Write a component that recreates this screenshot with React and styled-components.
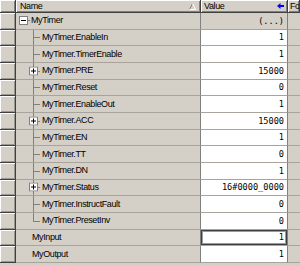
import React from 'react';
import styled, { createGlobalStyle, css } from 'styled-components';

const Global = createGlobalStyle`
  html, body { margin: 0; padding: 0; background: #d4d0c8; }
  body { width: 300px; height: 266px; overflow: hidden; }
  #root { width: 300px; height: 266px; }
`;

const Grid = styled.div`
  display: grid;
  grid-template-columns: 16px 185px 87px 12px;
  grid-template-rows: 13px repeat(15, 16.6667px);
  width: 300px;
  background: #d4d0c8;
  font-family: "Liberation Sans", Arial, sans-serif;
  font-size: 9px;
  letter-spacing: -0.4px;
  color: #000;
  overflow: hidden;
`;

const HeaderCell = styled.div`
  box-sizing: border-box;
  display: flex;
  align-items: center;
  justify-content: space-between;
  padding: 0 ${p => p.$pr || 0}px 0 ${p => p.$pl || 0}px;
  background: #d4d0c8;
  border-right: 1px solid #404040;
  border-bottom: 1px solid #404040;
  box-shadow: inset 1px 1px 0 #ffffff, inset -1px -1px 0 #808080;
  white-space: nowrap;
  overflow: hidden;
`;

const Gutter = styled.div`
  box-sizing: border-box;
  background: #d4d0c8;
  border-right: 1px solid #404040;
  border-bottom: 1px solid #404040;
  box-shadow: inset 1px 1px 0 #ffffff, inset -1px -1px 0 #9a978f;
`;

const NameCell = styled.div`
  box-sizing: border-box;
  display: flex;
  align-items: center;
  padding-left: ${p => p.$pl}px;
  background: #d4d0c8;
  border-right: 1px solid #808080;
  border-bottom: 1px solid #a8a49c;
  white-space: nowrap;
  overflow: hidden;
`;

const Branch = styled.div`
  position: relative;
  align-self: stretch;
  width: 8px;
  flex: none;
  &::before {
    content: '';
    position: absolute;
    left: 0;
    top: 0;
    bottom: ${p => (p.$last ? '50%' : '-1px')};
    width: 1px;
    background: #808080;
  }
  &::after {
    content: '';
    position: absolute;
    left: 0;
    top: 50%;
    width: 7px;
    height: 1px;
    background: #808080;
  }
`;

const BranchExpander = styled.div`
  position: absolute;
  left: -4px;
  top: 50%;
  transform: translateY(-50%);
  width: 9px;
  height: 9px;
  z-index: 1;
  display: flex;
`;

const Stub = styled.div`
  width: ${p => p.$w}px;
  height: 1px;
  background: ${p => (p.$line ? '#808080' : 'transparent')};
  flex: none;
`;

const Label = styled.span`
  padding-left: 1px;
  line-height: 1;
`;

const ValueCell = styled.div`
  box-sizing: border-box;
  display: flex;
  align-items: center;
  justify-content: flex-end;
  padding-right: 3px;
  background: ${p => (p.$parent ? '#d4d0c8' : '#ffffff')};
  border-right: 1px solid #808080;
  border-bottom: 1px solid #a8a49c;
  font-family: "DejaVu Sans Mono", "Liberation Mono", monospace;
  font-size: 8.6px;
  letter-spacing: 0;
  white-space: nowrap;
  ${p =>
    p.$focused &&
    css`
      box-shadow: inset 0 0 0 1px #404040, inset 0 0 0 2px #9a9a9a;
    `}
`;

const FoCell = styled.div`
  box-sizing: border-box;
  background: #d4d0c8;
  border-bottom: 1px solid #a8a49c;
`;

const Expander = ({ open }) => (
  <svg width="9" height="9" viewBox="0 0 9 9">
    <rect x="0.5" y="0.5" width="8" height="8" fill="#fff" stroke="#808080" />
    <path d="M2 4.5h5" stroke="#000" />
    {!open && <path d="M4.5 2v5" stroke="#000" />}
  </svg>
);

const SortMark = () => (
  <svg width="7" height="7" viewBox="0 0 7 7">
    <path d="M3.5 0.5 L0.5 6.5" stroke="#808080" fill="none" />
    <path d="M3.5 0.5 L6.5 6.5 M0.5 6.5 H6.5" stroke="#ffffff" fill="none" />
  </svg>
);

const BlueArrow = () => (
  <svg width="7" height="6" viewBox="0 0 7 6">
    <polygon points="0,3 3.5,0 3.5,6" fill="#0000ff" />
    <rect x="3" y="2" width="4" height="2" fill="#0000ff" />
  </svg>
);

const rows = [
  { name: 'MyTimer', level: 0, expander: 'minus', value: '(...)', parent: true },
  { name: 'MyTimer.EnableIn', level: 1, value: '1' },
  { name: 'MyTimer.TimerEnable', level: 1, value: '1' },
  { name: 'MyTimer.PRE', level: 1, expander: 'plus', value: '15000' },
  { name: 'MyTimer.Reset', level: 1, value: '0' },
  { name: 'MyTimer.EnableOut', level: 1, value: '1' },
  { name: 'MyTimer.ACC', level: 1, expander: 'plus', value: '15000' },
  { name: 'MyTimer.EN', level: 1, value: '1' },
  { name: 'MyTimer.TT', level: 1, value: '0' },
  { name: 'MyTimer.DN', level: 1, value: '1' },
  { name: 'MyTimer.Status', level: 1, expander: 'plus', value: '16#0000_0000' },
  { name: 'MyTimer.InstructFault', level: 1, value: '0' },
  { name: 'MyTimer.PresetInv', level: 1, value: '0', last: true },
  { name: 'MyInput', level: 0, value: '1', focused: true },
  { name: 'MyOutput', level: 0, value: '1' },
];

const NameContent = ({ row }) => {
  if (row.level === 0) {
    return (
      <NameCell $pl={3}>
        {row.expander ? <Expander open={row.expander === 'minus'} /> : <Stub $w={9} />}
        <Stub $w={row.expander ? 2 : 3} $line={!!row.expander} />
        <Label>{row.name}</Label>
      </NameCell>
    );
  }
  return (
    <NameCell $pl={17}>
      <Branch $last={row.last}>
        {row.expander && (
          <BranchExpander>
            <Expander open={row.expander === 'minus'} />
          </BranchExpander>
        )}
      </Branch>
      <Label>{row.name}</Label>
    </NameCell>
  );
};

export default function App() {
  return (
    <>
      <Global />
      <Grid>
        <HeaderCell />
        <HeaderCell $pl={4} $pr={4}>
          <span>Name</span>
          <SortMark />
        </HeaderCell>
        <HeaderCell $pl={3} $pr={3}>
          <span>Value</span>
          <BlueArrow />
        </HeaderCell>
        <HeaderCell $pl={2}>
          <span>Fo</span>
        </HeaderCell>
        {rows.map(row => (
          <React.Fragment key={row.name}>
            <Gutter />
            <NameContent row={row} />
            <ValueCell $parent={row.parent} $focused={row.focused}>
              {row.value}
            </ValueCell>
            <FoCell />
          </React.Fragment>
        ))}
      </Grid>
    </>
  );
}
